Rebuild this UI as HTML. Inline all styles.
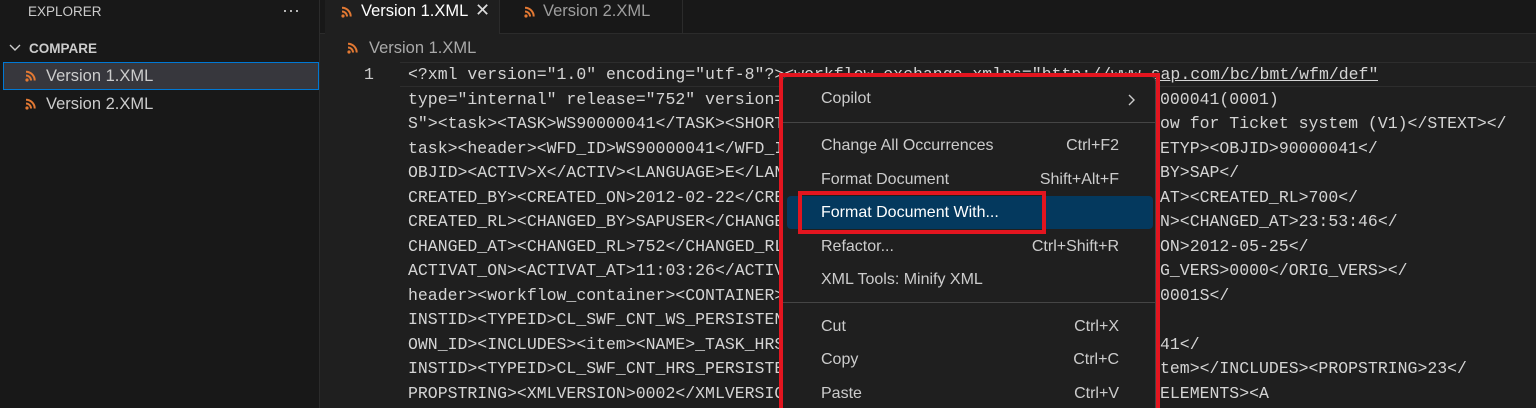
<!DOCTYPE html>
<html><head><meta charset="utf-8"><style>
*{margin:0;padding:0;box-sizing:border-box}
html,body{width:1536px;height:408px;overflow:hidden}
body{background:#1f1f1f;font-family:"Liberation Sans",sans-serif;position:relative}
.a{position:absolute;white-space:pre}
.side{position:absolute;left:0;top:0;width:320px;height:408px;background:#181818;border-right:1px solid #2b2b2b}
.tabbar{position:absolute;left:320px;top:0;right:0;height:34px;background:#181818;border-bottom:1px solid #2b2b2b}
.code{font-family:"Liberation Mono",monospace;font-size:16.5px;color:#d4d4d4;line-height:24.5px}
.menu{position:absolute;left:782px;top:76px;width:374px;height:332px;background:#1f1f1f;border:1px solid #454545;border-bottom:none;border-radius:5px 5px 0 0;overflow:hidden}
.mi{position:absolute;left:38px;font-size:16px;color:#cccccc;white-space:pre}
.sc{position:absolute;right:36px;font-size:16px;color:#cccccc}
.sep{position:absolute;left:0;right:0;height:1px;background:#454545}
</style></head><body>
<svg width="0" height="0" style="position:absolute"><defs><g id="rss"><circle cx="2" cy="10" r="1.6" fill="#e37933"/><path d="M1 5.5a5 5 0 0 1 5 5M1 1.8a8.7 8.7 0 0 1 8.7 8.7" stroke="#e37933" stroke-width="2" fill="none"/></g></defs></svg>
<div class="side">
<div class="a" style="left:28px;top:4px;font-size:13.5px;color:#ccc">EXPLORER</div>
<div class="a" style="left:282px;top:0px;font-size:18px;color:#ccc;letter-spacing:0px">···</div>
<svg class="a" style="left:8px;top:42px" width="14" height="12"><path d="M2 3l5 5 5-5" stroke="#ccc" stroke-width="1.4" fill="none"/></svg>
<div class="a" style="left:29px;top:41px;font-size:13.5px;font-weight:bold;color:#ccc">COMPARE</div>
<div class="a" style="left:3px;top:62px;width:316px;height:28px;background:#37373d;border:1px solid #0078d4"></div>
<svg class="a" style="left:25px;top:70px" width="12" height="12"><use href="#rss"/></svg>
<div class="a" style="left:46px;top:67px;font-size:16.5px;color:#ccc">Version 1.XML</div>
<svg class="a" style="left:25px;top:98px" width="12" height="12"><use href="#rss"/></svg>
<div class="a" style="left:46px;top:95px;font-size:16.5px;color:#ccc">Version 2.XML</div>
</div>
<div class="tabbar">
<div class="a" style="left:5px;top:0;width:175px;height:34px;background:#1f1f1f;border-right:1px solid #2b2b2b"></div>
<svg class="a" style="left:21px;top:6px" width="12" height="12"><use href="#rss"/></svg>
<div class="a" style="left:41px;top:2px;font-size:16.5px;color:#fff">Version 1.XML</div>
<div class="a" style="left:155px;top:0px;font-size:18px;color:#ddd">✕</div>
<div class="a" style="left:180px;top:0;width:183px;height:34px;border-right:1px solid #2b2b2b"></div>
<svg class="a" style="left:204px;top:6px" width="12" height="12"><use href="#rss"/></svg>
<div class="a" style="left:223px;top:2px;font-size:16.5px;color:#9d9d9d">Version 2.XML</div>
</div>
<svg class="a" style="left:347px;top:42px" width="12" height="12"><use href="#rss"/></svg>
<div class="a" style="left:369px;top:39px;font-size:16.5px;color:#a9a9a9">Version 1.XML</div>
<div class="a" style="left:400px;top:62px;width:1136px;height:25px;border-top:1px solid #2d2d2d;border-bottom:1px solid #2d2d2d"></div>
<div class="a code" style="left:364px;top:63px;color:#ccc">1</div>
<div class="a code" style="left:408px;top:63px;height:345px;overflow:hidden">&lt;?xml version="1.0" encoding="utf-8"?&gt;<span style="text-decoration:underline">&lt;workflow_exchange xmlns="http://www.sap.com/bc/bmt/wfm/def"</span>
type="internal" release="752" version=
S"&gt;&lt;task&gt;&lt;TASK&gt;WS90000041&lt;/TASK&gt;&lt;SHORT
task&gt;&lt;header&gt;&lt;WFD_ID&gt;WS90000041&lt;/WFD_I
OBJID&gt;&lt;ACTIV&gt;X&lt;/ACTIV&gt;&lt;LANGUAGE&gt;E&lt;/LAN
CREATED_BY&gt;&lt;CREATED_ON&gt;2012-02-22&lt;/CRE
CREATED_RL&gt;&lt;CHANGED_BY&gt;SAPUSER&lt;/CHANGE
CHANGED_AT&gt;&lt;CHANGED_RL&gt;752&lt;/CHANGED_RL
ACTIVAT_ON&gt;&lt;ACTIVAT_AT&gt;11:03:26&lt;/ACTIV
header&gt;&lt;workflow_container&gt;&lt;CONTAINER&gt;
INSTID&gt;&lt;TYPEID&gt;CL_SWF_CNT_WS_PERSISTEN
OWN_ID&gt;&lt;INCLUDES&gt;&lt;item&gt;&lt;NAME&gt;_TASK_HRS
INSTID&gt;&lt;TYPEID&gt;CL_SWF_CNT_HRS_PERSISTE
PROPSTRING&gt;&lt;XMLVERSION&gt;0002&lt;/XMLVERSIO</div>
<div class="a code" style="left:1160px;top:63px;height:345px;overflow:hidden">
000041(0001)
ow for Ticket system (V1)&lt;/STEXT&gt;&lt;/
ETYP&gt;&lt;OBJID&gt;90000041&lt;/
BY&gt;SAP&lt;/
AT&gt;&lt;CREATED_RL&gt;700&lt;/
N&gt;&lt;CHANGED_AT&gt;23:53:46&lt;/
ON&gt;2012-05-25&lt;/
G_VERS&gt;0000&lt;/ORIG_VERS&gt;&lt;/
0001S&lt;/

41&lt;/
tem&gt;&lt;/INCLUDES&gt;&lt;PROPSTRING&gt;23&lt;/
ELEMENTS&gt;&lt;A</div>
<div class="menu">
<div class="mi" style="top:13px">Copilot</div>
<svg class="a" style="left:344px;top:16px" width="10" height="14"><path d="M2 2l5 5-5 5" stroke="#ccc" stroke-width="1.4" fill="none"/></svg>
<div class="sep" style="top:45px"></div>
<div class="mi" style="top:60px">Change All Occurrences</div><div class="sc" style="top:60px">Ctrl+F2</div>
<div class="mi" style="top:94px">Format Document</div><div class="sc" style="top:94px">Shift+Alt+F</div>
<div class="a" style="left:4px;top:119px;width:366px;height:33px;background:#04395e;border-radius:4px"></div>
<div class="mi" style="top:127px;color:#fff">Format Document With...</div>
<div class="mi" style="top:161px">Refactor...</div><div class="sc" style="top:161px">Ctrl+Shift+R</div>
<div class="mi" style="top:194px">XML Tools: Minify XML</div>
<div class="sep" style="top:225px"></div>
<div class="mi" style="top:241px">Cut</div><div class="sc" style="top:241px">Ctrl+X</div>
<div class="mi" style="top:274px">Copy</div><div class="sc" style="top:274px">Ctrl+C</div>
<div class="mi" style="top:308px">Paste</div><div class="sc" style="top:308px">Ctrl+V</div>
</div>
<div class="a" style="left:779px;top:73px;width:381px;height:335px;border:4px solid #e3151f;border-bottom:none"></div>
<div class="a" style="left:798px;top:191px;width:248px;height:43px;border:4px solid #e3151f"></div>
</body></html>
